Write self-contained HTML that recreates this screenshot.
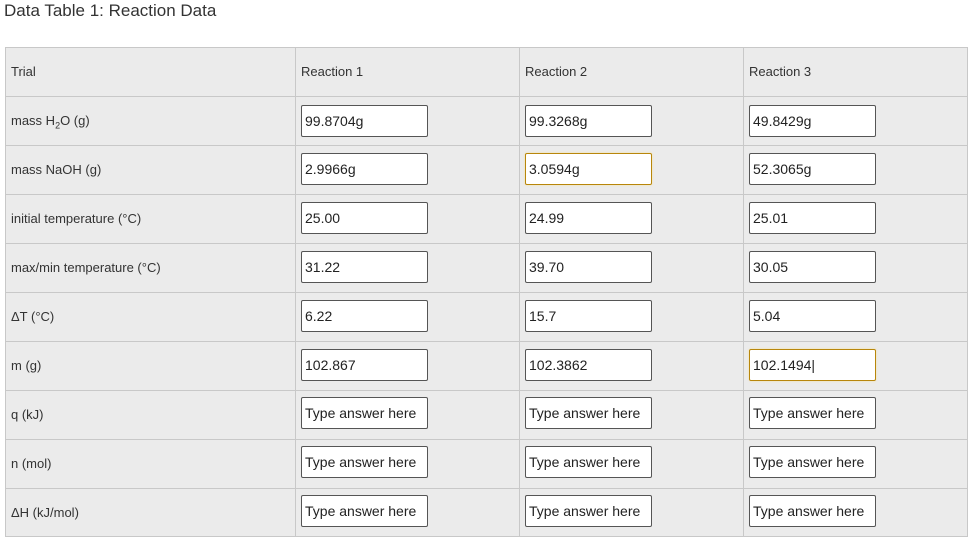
<!DOCTYPE html>
<html><head><style>
body{margin:0;width:972px;height:540px;background:#fff;font-family:"Liberation Sans",Arial,sans-serif;position:relative;overflow:hidden}
.t{position:absolute;left:4px;top:1px;font-size:17px;color:#333}
.tb{position:absolute;left:5px;top:47px;width:963px;height:490px;background:#ebebeb;border:1px solid #c8c8c8;box-sizing:border-box}
.h{position:absolute;left:5px;width:963px;height:1px;background:#c8c8c8}
.v{position:absolute;top:47px;width:1px;height:490px;background:#c8c8c8}
.l{position:absolute;font-size:13px;color:#333}
.i{position:absolute;width:127px;height:32px;box-sizing:border-box;border:1px solid #555;border-radius:2px;background:#fff;font-size:14px;color:#222;padding-left:3px;line-height:30px}
.y{border-color:#b8860b;box-shadow:0 0 2px #f5e1a0}
</style></head><body>
<div class="t">Data Table 1: Reaction Data</div>
<div class="tb"></div>
<div class="h" style="top:96px"></div><div class="h" style="top:145px"></div><div class="h" style="top:194px"></div><div class="h" style="top:243px"></div><div class="h" style="top:292px"></div><div class="h" style="top:341px"></div><div class="h" style="top:390px"></div><div class="h" style="top:439px"></div><div class="h" style="top:488px"></div>
<div class="v" style="left:295px"></div><div class="v" style="left:519px"></div><div class="v" style="left:743px"></div>
<div class="l" style="left:11px;top:64px">Trial</div>
<div class="l" style="left:301px;top:64px">Reaction 1</div>
<div class="l" style="left:525px;top:64px">Reaction 2</div>
<div class="l" style="left:749px;top:64px">Reaction 3</div>
<div class="l" style="left:11px;top:113px">mass H<sub style="font-size:9px">2</sub>O (g)</div>
<div class="l" style="left:11px;top:162px">mass NaOH (g)</div>
<div class="l" style="left:11px;top:211px">initial temperature (°C)</div>
<div class="l" style="left:11px;top:260px">max/min temperature (°C)</div>
<div class="l" style="left:11px;top:309px">ΔT (°C)</div>
<div class="l" style="left:11px;top:358px">m (g)</div>
<div class="l" style="left:11px;top:407px">q (kJ)</div>
<div class="l" style="left:11px;top:456px">n (mol)</div>
<div class="l" style="left:11px;top:505px">ΔH (kJ/mol)</div>

<div class="i" style="left:301px;top:105px">99.8704g</div>
<div class="i" style="left:525px;top:105px">99.3268g</div>
<div class="i" style="left:749px;top:105px">49.8429g</div>
<div class="i" style="left:301px;top:153px">2.9966g</div>
<div class="i y" style="left:525px;top:153px">3.0594g</div>
<div class="i" style="left:749px;top:153px">52.3065g</div>
<div class="i" style="left:301px;top:202px">25.00</div>
<div class="i" style="left:525px;top:202px">24.99</div>
<div class="i" style="left:749px;top:202px">25.01</div>
<div class="i" style="left:301px;top:251px">31.22</div>
<div class="i" style="left:525px;top:251px">39.70</div>
<div class="i" style="left:749px;top:251px">30.05</div>
<div class="i" style="left:301px;top:300px">6.22</div>
<div class="i" style="left:525px;top:300px">15.7</div>
<div class="i" style="left:749px;top:300px">5.04</div>
<div class="i" style="left:301px;top:349px">102.867</div>
<div class="i" style="left:525px;top:349px">102.3862</div>
<div class="i y" style="left:749px;top:349px">102.1494|</div>
<div class="i" style="left:301px;top:397px">Type answer here</div>
<div class="i" style="left:525px;top:397px">Type answer here</div>
<div class="i" style="left:749px;top:397px">Type answer here</div>
<div class="i" style="left:301px;top:446px">Type answer here</div>
<div class="i" style="left:525px;top:446px">Type answer here</div>
<div class="i" style="left:749px;top:446px">Type answer here</div>
<div class="i" style="left:301px;top:495px">Type answer here</div>
<div class="i" style="left:525px;top:495px">Type answer here</div>
<div class="i" style="left:749px;top:495px">Type answer here</div>
</body></html>
